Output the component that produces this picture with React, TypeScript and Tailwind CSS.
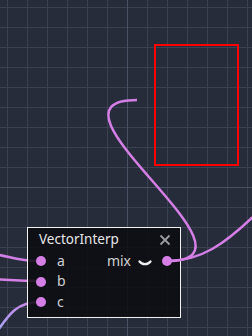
const gridBg =
  "bg-[#272c3b] bg-[linear-gradient(to_right,#3b4153_1px,transparent_1px),linear-gradient(to_bottom,#3b4153_1px,transparent_1px)] bg-size-[20px_20px] bg-position-[7px_7px]";

const Port = () => (
  <span className="w-[10px] h-[10px] rounded-full bg-[#d57fe6] shrink-0" />
);

const App = () => {
  const inputs = ["a", "b", "c"];

  return (
    <div
      className={`relative w-[252px] h-[336px] overflow-hidden ${gridBg}`}
      style={{ fontFamily: '"Noto Sans", "Open Sans", sans-serif' }}
    >
      {/* major grid lines */}
      <div className="absolute left-[127px] top-0 w-px h-full bg-[#4a5164]" />
      <div className="absolute top-[187px] left-0 h-px w-full bg-[#4a5164]" />

      {/* selection box */}
      <div className="absolute left-[154px] top-[44px] w-[85px] h-[122px] border-2 border-[#ff0000]" />

      {/* wires under the node */}
      <svg
        className="absolute inset-0"
        width={252}
        height={336}
        viewBox="0 0 252 336"
        fill="none"
      >
        <defs>
          <linearGradient id="wc" x1="0" y1="330" x2="40" y2="302" gradientUnits="userSpaceOnUse">
            <stop offset="0" stopColor="#a7a3f3" />
            <stop offset="1" stopColor="#d57fe6" />
          </linearGradient>
        </defs>
        <path d="M-30 252 C10 253, 8 261, 40 261" stroke="#d57fe6" strokeWidth={2.5} />
        <path d="M-30 279 C10 279, 8 281, 40 281" stroke="#d57fe6" strokeWidth={2.5} />
        <path d="M-6 336 C10 312, 18 302, 40 302" stroke="url(#wc)" strokeWidth={2.5} />
      </svg>

      {/* node */}
      <div className="absolute left-[27px] top-[227px] w-[154px] h-[91px] border border-[#f2f2f2] bg-[#0b0c10]/[0.88] text-[#cfd0d4] flex flex-col">
        <div className="flex items-center justify-between h-[23px] pl-[11px] pr-[9px] pt-[1px]">
          <span className="text-[13.5px] text-[#e6e6e8] leading-none">VectorInterp</span>
          <svg width={12} height={12} viewBox="0 0 12 12" fill="none">
            <path d="M1.5 1.5 L10.5 10.5 M10.5 1.5 L1.5 10.5" stroke="#9c9ca0" strokeWidth={1.8} />
          </svg>
        </div>
        {inputs.map((name, i) => (
          <div key={name} className="flex items-center h-[20.5px] pl-[8px] pr-[8px]">
            <Port />
            <span className="ml-[11px] text-[14px] leading-none pb-[1px]">{name}</span>
            {i === 0 && (
              <div className="ml-auto flex items-center">
                <span className="text-[14px] leading-none pb-[1px]">mix</span>
                <svg className="ml-[7px] mt-[4px]" width={14} height={7} viewBox="0 0 14 7" fill="none">
                  <path d="M1.5 1.5 C4 5, 10 5, 12.5 1.5" stroke="#eeeeee" strokeWidth={2.2} strokeLinecap="round" />
                </svg>
                <span className="ml-[10px] relative z-30 w-[10px] h-[10px] rounded-full bg-[#d57fe6]" />
              </div>
            )}
          </div>
        ))}
      </div>

      {/* wires over the node */}
      <svg
        className="absolute inset-0 z-20 pointer-events-none"
        width={252}
        height={336}
        viewBox="0 0 252 336"
        fill="none"
      >
        <path d="M167 261 C277 261, 27 100, 137 100" stroke="#d57fe6" strokeWidth={2.5} />
        <path d="M167 261 C200 261, 224 246, 262 208" stroke="#d57fe6" strokeWidth={2.5} />
      </svg>
    </div>
  );
};

export default App;
